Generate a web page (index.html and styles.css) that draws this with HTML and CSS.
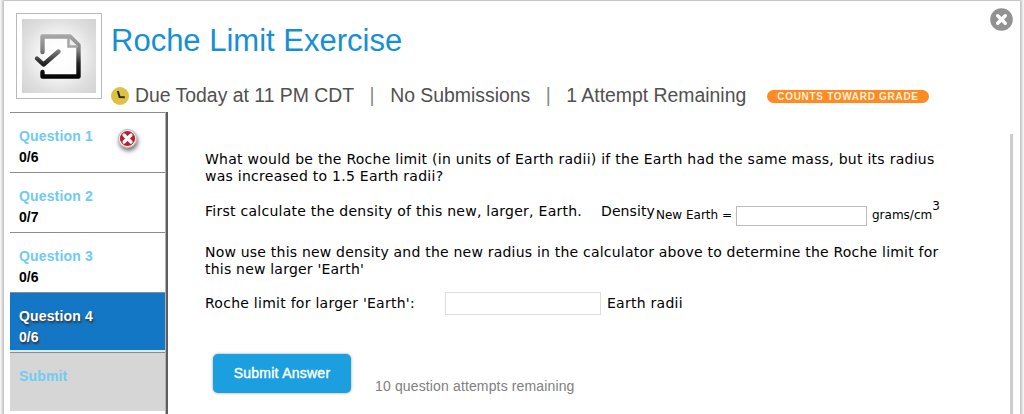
FILE: index.html
```html
<!DOCTYPE html>
<html lang="en">
  <head>
    <meta charset="UTF-8" />
    <meta name="viewport" content="width=device-width, initial-scale=1.0" />
    <title>Roche Limit Exercise</title>
    <link rel="stylesheet" href="styles.css">
  </head>
  <body>
    <div class="dialog">
      <button class="close" aria-label="Close">
        <svg width="23" height="23" viewBox="0 0 23 23">
          <circle cx="11.5" cy="11.5" r="11.3" fill="#929292" />
          <path d="M7.7 7.7l7.6 7.6M15.3 7.7l-7.6 7.6" stroke="#fff" stroke-width="3.4" stroke-linecap="round" />
        </svg>
      </button>
      <header class="header">
        <div class="thumb">
          <svg width="74" height="74" viewBox="0 0 74 74">
            <defs>
              <radialGradient id="tile" cx="50%" cy="50%" r="70%">
                <stop offset="0" stop-color="#fff" />
                <stop offset="0.4" stop-color="#f4f4f4" />
                <stop offset="0.7" stop-color="#dfdfdf" />
                <stop offset="1" stop-color="#d2d2d2" />
              </radialGradient>
              <linearGradient id="ink" gradientUnits="userSpaceOnUse" x1="0" y1="16" x2="0" y2="60">
                <stop offset="0" stop-color="#a8a8a8" />
                <stop offset="0.35" stop-color="#808080" />
                <stop offset="0.65" stop-color="#222" />
                <stop offset="1" stop-color="#000" />
              </linearGradient>
            </defs>
            <rect width="74" height="74" fill="url(#tile)" />
            <path d="M20.5 17.5H48L56.5 26V58H20.5Z" fill="#fff" fill-opacity="0.7" />
            <g fill="none" stroke="url(#ink)" stroke-width="4.4" stroke-linecap="round" stroke-linejoin="round">
              <path d="M20.5 33V17.5H48L56.5 26V57.5H20.5V53" />
              <path d="M15 39.5L21.5 45.5L36.5 32.5" />
            </g>
            <path d="M46.5 18.5V27.5H56" fill="#eee" stroke="#a5a5a5" stroke-width="2.5" />
          </svg>
        </div>
        <div class="heading">
          <h1 class="title">Roche Limit Exercise</h1>
          <div class="meta">
            <svg class="clock" width="18" height="18" viewBox="0 0 18 18">
              <circle cx="9" cy="9" r="9" fill="#dec141" />
              <path d="M6.8 4L8.6 10L13.8 10.3" fill="none" stroke="#2b260e" stroke-width="2" />
            </svg>
            <span class="due">Due Today at 11 PM CDT</span>
            <span class="bar">|</span>
            <span class="subs">No Submissions</span>
            <span class="bar">|</span>
            <span class="attempts">1 Attempt Remaining</span>
            <span class="badge">COUNTS TOWARD GRADE</span>
          </div>
        </div>
      </header>
      <div class="content">
        <nav class="questions">
          <a class="question">
            <span class="name">Question 1</span>
            <span class="score">0/6</span>
            <svg class="wrong" width="24" height="30" viewBox="0 0 24 30">
              <circle cx="11.5" cy="10.5" r="9" fill="#fff" stroke="#c4c4c4" stroke-width="1.3" />
              <circle cx="11.5" cy="10.5" r="7.6" fill="#b91f2c" />
              <path d="M8 7l7 7M15 7l-7 7" stroke="#fff" stroke-width="3.2" stroke-linecap="round" />
            </svg>
          </a>
          <a class="question">
            <span class="name">Question 2</span>
            <span class="score">0/7</span>
          </a>
          <a class="question">
            <span class="name">Question 3</span>
            <span class="score">0/6</span>
          </a>
          <a class="question current">
            <span class="name">Question 4</span>
            <span class="score">0/6</span>
          </a>
          <a class="question submit">
            <span class="name">Submit</span>
          </a>
        </nav>
        <main class="problem">
          <p class="intro">What would be the Roche limit (in units of Earth radii) if the Earth had the same mass, but its radius<br>was increased to 1.5 Earth radii?</p>
          <div class="density">
            <span class="first">First calculate the density of this new, larger, Earth.</span>
            <span class="label">Density</span>
            <span class="sub">New Earth =</span>
            <input class="answer" type="text" aria-label="Density" />
            <span class="unit">grams/cm</span>
            <span class="power">3</span>
          </div>
          <p class="next">Now use this new density and the new radius in the calculator above to determine the Roche limit for<br>this new larger 'Earth'</p>
          <div class="limit">
            <span class="limit-label">Roche limit for larger 'Earth':</span>
            <input class="answer wide" type="text" aria-label="Roche limit" />
            <span class="radii">Earth radii</span>
          </div>
          <div class="actions">
            <button class="submit-answer">Submit Answer</button>
            <span class="remaining">10 question attempts remaining</span>
          </div>
        </main>
      </div>
    </div>
  </body>
</html>
```
FILE: styles.css
```css
* {
  box-sizing: border-box;
}
body {
  margin: 0;
  height: 414px;
  overflow: hidden;
  background: #fff;
  font-family: 'Liberation Sans', Arial, sans-serif;
}
.dialog {
  position: relative;
  height: 413px;
  margin: 1px 4px 0 4px;
  padding: 12px 7px 0 6px;
  background: #fff;
  box-shadow: 0 0 3px 2px #bbb;
}
.close {
  position: absolute;
  top: 7px;
  right: 7px;
  width: 23px;
  height: 23px;
  padding: 0;
  border: none;
  background: none;
}
.close svg,
.thumb svg {
  display: block;
}
.header {
  display: flex;
  height: 99px;
  padding-left: 6px;
}
.thumb {
  width: 86px;
  height: 86px;
  padding: 5px;
  border: 1px solid #b9b9b9;
}
.heading {
  padding-left: 9px;
}
.title {
  margin: 10px 0 0;
  color: #178fd3;
  font-size: 31px;
  font-weight: normal;
  line-height: 36px;
}
.meta {
  display: flex;
  align-items: center;
  height: 24px;
  margin-top: 24px;
  color: #505050;
  font-size: 19.4px;
  line-height: 24px;
  white-space: nowrap;
}
.clock {
  margin: 1px 6px 0 0;
}
.bar {
  width: 36px;
  color: #888;
  text-align: center;
}
.badge {
  height: 13px;
  margin: 3px 0 0 21px;
  padding: 0 10px;
  border-radius: 7px;
  background: #ff8a22;
  color: #fff1dc;
  font-size: 10px;
  font-weight: bold;
  line-height: 14px;
  letter-spacing: 0.7px;
}
.content {
  display: flex;
  height: 302px;
  overflow: hidden;
}
.questions {
  width: 158px;
  border-right: 2px solid #5e5e5e;
  box-shadow: inset -1px 0 0 #b5b5b5;
}
.question {
  display: flex;
  position: relative;
  flex-direction: column;
  height: 60px;
  margin-right: 1px;
  padding: 15px 9px 0;
  border-top: 1px solid #8b8b8b;
  color: #000;
  font-size: 14px;
  font-weight: bold;
}
.name {
  height: 21px;
  color: #70cbf2;
  line-height: 16px;
  letter-spacing: 0.15px;
}
.score {
  line-height: 16px;
}
.wrong {
  position: absolute;
  top: 15px;
  left: 106px;
  filter: drop-shadow(1px 3px 2px #777);
}
.current {
  border-bottom: 2px solid #d5ebf8;
  background: #1377c5;
  color: #fff;
  text-shadow: 1px 2px 2px #333;
}
.current .name {
  color: #fff;
}
.submit {
  height: 59px;
  background: #d6d6d6;
}
.problem {
  flex: 1;
  margin-top: 22px;
  padding: 16px 0 0 37px;
  border-right: 3px solid #ccc;
  color: #000;
  font-family: Verdana, 'DejaVu Sans', sans-serif;
  font-size: 14px;
  line-height: 17px;
  letter-spacing: 0.26px;
  white-space: nowrap;
}
.problem p {
  margin: 0;
}
.intro {
  padding-top: 1px;
}
.density {
  display: flex;
  height: 26px;
  margin-top: 13px;
}
.first,
.label {
  margin-top: 5px;
}
.first {
  width: 396px;
}
.label {
  width: 55px;
  letter-spacing: 0.1px;
}
.sub {
  width: 80px;
  margin-top: 9px;
  font-size: 12px;
  letter-spacing: 0;
}
.answer {
  width: 131px;
  height: 20px;
  margin: 8px 5px 0 0;
  border: 1px solid #bbb;
  background: #fff;
}
.unit {
  margin-top: 9px;
  font-size: 12px;
  letter-spacing: 0;
}
.power {
  margin-top: 0;
  font-size: 12px;
}
.next {
  padding-top: 20px;
  letter-spacing: 0.21px;
}
.limit {
  display: flex;
  align-items: center;
  height: 23px;
  margin-top: 14px;
}
.limit-label {
  width: 240px;
}
.wide {
  width: 156px;
  height: 23px;
  margin: 0 6px 0 0;
  border-color: #ddd;
}
.actions {
  display: flex;
  align-items: flex-start;
  margin: 39px 0 0 8px;
  font-family: 'Liberation Sans', Arial, sans-serif;
}
.submit-answer {
  width: 138px;
  height: 39px;
  padding: 0 0 1px;
  border: none;
  border-radius: 5px;
  background: #1b9fde;
  box-shadow: 0 0 3px #999;
  color: #fff;
  font-family: inherit;
  font-size: 14px;
  letter-spacing: 0.25px;
  -webkit-text-stroke: 0.4px #fff;
}
.remaining {
  margin: 24px 0 0 24px;
  color: #808080;
  font-size: 14px;
  letter-spacing: 0.14px;
}
```
